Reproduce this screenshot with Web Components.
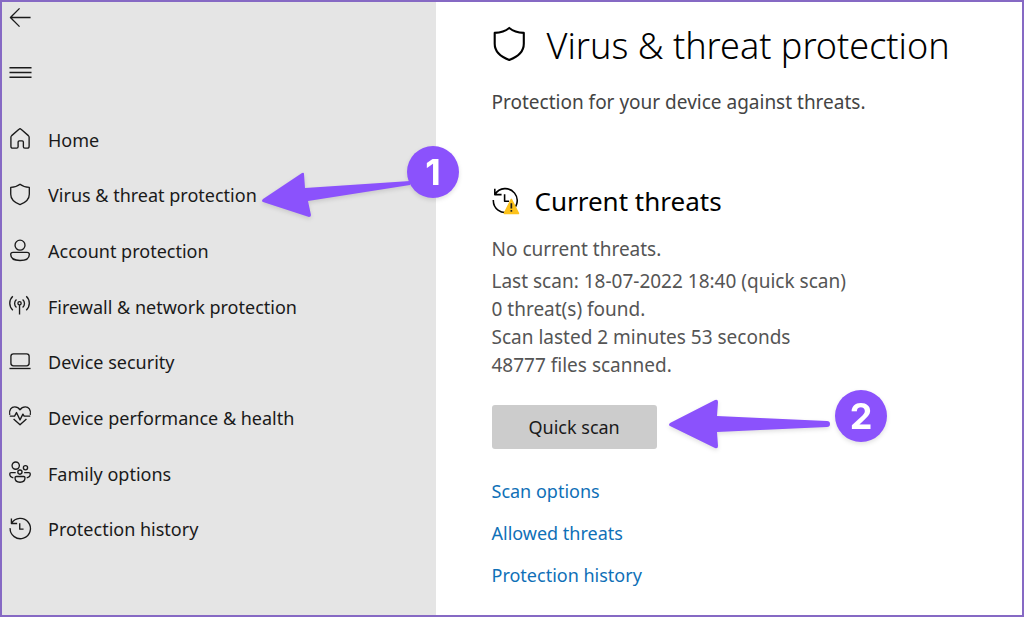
<!DOCTYPE html>
<html lang="en">
<head>
<meta charset="utf-8">
<meta name="viewport" content="width=device-width, initial-scale=1">
<title>Virus &amp; threat protection</title>
<style>
  body {
    margin: 0;
    font: 19px/28px "Noto Sans", "Open Sans", sans-serif;
    color: #1a1a1a;
    background: #fff;
  }
</style>
</head>
<body>
<security-app>
  <side-nav slot="nav">
    <nav-item icon="home">Home</nav-item>
    <nav-item icon="shield">Virus &amp; threat protection</nav-item>
    <nav-item icon="account">Account protection</nav-item>
    <nav-item icon="network">Firewall &amp; network protection</nav-item>
    <nav-item icon="laptop">Device security</nav-item>
    <nav-item icon="heart">Device performance &amp; health</nav-item>
    <nav-item icon="family">Family options</nav-item>
    <nav-item icon="history">Protection history</nav-item>
  </side-nav>

  <page-header>
    Virus &amp; threat protection
    <span slot="description">Protection for your device against threats.</span>
  </page-header>

  <threat-section>
    <span slot="heading">Current threats</span>
    <span slot="status">No current threats.</span>
    <div>Last scan: 18-07-2022 18:40 (quick scan)</div>
    <div>0 threat(s) found.</div>
    <div>Scan lasted 2 minutes 53 seconds</div>
    <div>48777 files scanned.</div>
    <span slot="action">Quick scan</span>
    <text-link slot="links">Scan options</text-link>
    <text-link slot="links">Allowed threats</text-link>
    <text-link slot="links">Protection history</text-link>
  </threat-section>

  <step-callout slot="overlay" arrow="up" style="left: 260px; top: 144px">1</step-callout>
  <step-callout slot="overlay" arrow="flat" style="left: 666px; top: 388px">2</step-callout>
</security-app>

<script>
const icons = {
  back: '<path d="M22.5 12H1.5M11 2.5 1.5 12l9.5 9.5"/>',
  menu: '<path d="M.5 7h23M.5 12h23M.5 17h23"/>',
  home: '<path d="M2 10.8q0-1 .8-1.8l7.6-6.6q1.1-1 2.2 0L20.2 9q.8.8.8 1.8v9.2q0 2-2 2h-2.5q-1.5 0-1.5-1.5v-4.8q0-1.2-1.2-1.2h-3.1q-1.2 0-1.2 1.2v4.8q0 1.5-1.5 1.5H4q-2 0-2-2z"/>',
  shield: '<path d="M11.5 1.3C8.8 3.5 5.5 4.4 1.8 4.6v7.2c0 5.3 3.7 8.6 9.7 10.8 6-2.2 9.7-5.5 9.7-10.8V4.6c-3.7-.2-7-1.1-9.7-3.3z"/>',
  account: '<circle cx="11.5" cy="6.4" r="5.2"/><path d="M4.2 14h14.6q2.4 0 2.4 2.1c0 4-4 6.3-9.7 6.3s-9.7-2.3-9.7-6.3Q1.8 14 4.2 14z"/>',
  network: '<circle cx="11" cy="9.7" r="1.7"/><path d="M11 11.5v9.8M7.8 14a5.4 5.4 0 0 1 0-8.3M14.2 14a5.4 5.4 0 0 0 0-8.3M4 17Q.8 14 .8 9.7T4 2.4M18 17q3.2-3 3.2-7.3T18 2.4"/>',
  laptop: '<rect x="2" y="4" width="19" height="12.5" rx="2.6"/><path d="M.5 19.3h22"/>',
  heart: '<path d="M.8 10.2C-.2 5 2.6 2 6 2c2.3 0 4.2 1 5.5 3C12.8 3 14.7 2 17 2c3.4 0 6.2 3 5.2 8.2M.8 11.6h5l2-3.7 3.7 7.6 3-6 1.3 2.1h6.4M4.8 14.5l6.7 6.2 6.7-6.2"/>',
  family: '<circle cx="7" cy="4.8" r="3.8"/><circle cx="17.2" cy="7" r="2.2"/><circle cx="11.4" cy="11.6" r="2.2"/><path d="M7 12.2H2.2q-1.4 0-1.4 1.3c0 2.2 1.5 3.5 3.7 4M15.8 12.2h5q1.4 0 1.4 1.3c0 2.2-1.5 3.5-3.7 4M7.7 16.2h7.6q1.4 0 1.4 1.3c0 3-2.2 4.7-5.2 4.7s-5.2-1.7-5.2-4.7q0-1.3 1.4-1.3z"/>',
  history: '<path d="M2.5 1.5v5.3h6M2.7 6.6a10.6 10.6 0 1 1-1.5 5M11.2 6.5v6.2h4"/>',
  alert: '<path d="M2.5 1.5v5.3h6M2.7 6.6a10.6 10.6 0 1 1-1.5 5M11.2 6.5v6.2h4"/><path d="M17.2 11 23.5 23.5H11z" fill="#fcc21b" stroke="#fcc21b"/><path d="M17.2 14.5v4.7M17.2 20.5v1.6" stroke="#222" stroke-width="1.5"/>',
};

const arrows = {
  up: '<path d="M1 53 40 27q2-1 2 1l1 14 105-7v4L46 55l3 14q0 2-2 2L1 56q-2-1 0-3z"/>',
  flat: '<path d="M2 33 47 10q3-1 3 2l-1 14 110 5q3 0 3 3t-3 3L49 42l1 14q0 3-3 2L2 36q-2-1 0-3z"/>',
};

function define(tag, html, setup) {
  const template = document.createElement('template');
  template.innerHTML = html;

  customElements.define(tag, class extends HTMLElement {
    constructor() {
      super();
      this.attachShadow({ mode: 'open' }).appendChild(template.content.cloneNode(true));
    }

    connectedCallback() {
      if (setup) setup(this, this.shadowRoot);
    }
  });
}

define('app-icon', /* html */ `
  <style>
    :host { display: block; width: 23px; height: 23px; flex: none; }
    svg {
      display: block;
      width: 100%;
      height: 100%;
      overflow: visible;
      fill: none;
      stroke: currentColor;
      stroke-width: var(--icon-stroke, 1.4);
      stroke-linejoin: round;
    }
  </style>
  <svg viewBox="0 0 24 24" aria-hidden="true"></svg>
`, (host, root) => {
  root.querySelector('svg').innerHTML = icons[host.getAttribute('name')] || '';
});

define('security-app', /* html */ `
  <style>
    :host {
      display: flex;
      position: relative;
      box-sizing: border-box;
      min-height: 100vh;
      border: 2px solid #8669c4;
    }
    .nav { display: flex; flex: 0 0 42.5%; background: #e5e5e5; }
    main { flex: 1; min-width: 0; padding: 18px 24px 24px 56px; }
  </style>
  <div class="nav"><slot name="nav"></slot></div>
  <main><slot></slot></main>
  <slot name="overlay"></slot>
`);

define('side-nav', /* html */ `
  <style>
    :host {
      display: flex;
      flex: 1;
      flex-direction: column;
      box-sizing: border-box;
      padding: 4px 7px 58px;
      font-size: 18px;
    }
    .tools { display: flex; flex-direction: column; align-items: flex-start; gap: 32px; margin-bottom: 28px; }
    button { padding: 0; border: 0; background: none; color: inherit; }
    nav { display: flex; flex: 1; flex-direction: column; }
  </style>
  <div class="tools">
    <button aria-label="Back"><app-icon name="back"></app-icon></button>
    <button aria-label="Menu"><app-icon name="menu"></app-icon></button>
  </div>
  <nav><slot></slot></nav>
`);

define('nav-item', /* html */ `
  <style>
    :host { display: flex; flex: 1; }
    a {
      display: flex;
      flex: 1;
      align-items: center;
      gap: 16px;
      color: inherit;
      text-decoration: none;
    }
    app-icon { padding-bottom: 2px; }
  </style>
  <a href="#"><app-icon></app-icon><span><slot></slot></span></a>
`, (host, root) => {
  const icon = root.querySelector('app-icon');
  icon.shadowRoot.querySelector('svg').innerHTML = icons[host.getAttribute('icon')];
  icon.setAttribute('name', host.getAttribute('icon'));
});

define('page-header', /* html */ `
  <style>
    :host { display: block; }
    .title { display: flex; align-items: center; gap: 19px; }
    app-icon { width: 36px; height: 36px; padding-bottom: 4px; color: #000; }
    h1 { margin: 0; font-size: 36px; font-weight: 300; line-height: 52px; color: #000; }
    p { margin: 16px 0 0; color: #444; }
  </style>
  <div class="title">
    <app-icon name="shield"></app-icon>
    <h1><slot></slot></h1>
  </div>
  <p><slot name="description"></slot></p>
`);

define('threat-section', /* html */ `
  <style>
    :host { display: block; margin-top: 67px; }
    .heading { display: flex; align-items: center; gap: 16px; }
    app-icon { width: 27px; height: 27px; padding-bottom: 2px; color: #000; }
    h2 { margin: 0; font-size: 26px; font-weight: 400; line-height: 36px; color: #000; }
    .status { margin: 16px 0 4px; }
    .status, .details { color: #555; }
    button {
      display: block;
      margin: 26px 0 28px;
      padding: 8px 37px;
      border: 0;
      border-radius: 3px;
      background: #ccc;
      color: #1a1a1a;
      font: inherit;
      font-size: 18px;
    }
    .links { display: flex; flex-direction: column; align-items: flex-start; gap: 14px; font-size: 18px; }
  </style>
  <div class="heading">
    <app-icon name="alert"></app-icon>
    <h2><slot name="heading"></slot></h2>
  </div>
  <div class="status"><slot name="status"></slot></div>
  <div class="details"><slot></slot></div>
  <button><slot name="action"></slot></button>
  <div class="links"><slot name="links"></slot></div>
`);

define('text-link', /* html */ `
  <style>
    :host { display: block; }
    a { color: #0f70b7; text-decoration: none; }
  </style>
  <a href="#"><slot></slot></a>
`);

// arrow with a numbered badge at its tail, floats above the window
define('step-callout', /* html */ `
  <style>
    :host {
      display: flex;
      position: absolute;
      color: #fff;
      pointer-events: none;
      filter: drop-shadow(0 2px 2px rgb(0 0 0 / 12%));
    }
    svg { display: block; width: 167px; height: 76px; margin-right: -22px; fill: #8b52fc; }
    :host([arrow="flat"]) svg { margin-right: 0; }
    b {
      width: 52px;
      height: 52px;
      border-radius: 50%;
      background: #8b52fc;
      font: 700 36px/52px Inter, sans-serif;
      text-align: center;
    }
  </style>
  <svg viewBox="0 0 167 76" aria-hidden="true"></svg>
  <b><slot></slot></b>
`, (host, root) => {
  root.querySelector('svg').innerHTML = arrows[host.getAttribute('arrow')];
});
</script>
</body>
</html>
